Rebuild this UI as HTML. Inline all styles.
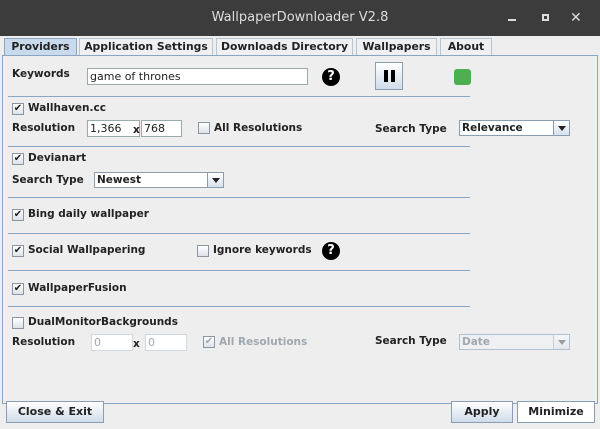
<!DOCTYPE html><html><head><style>
*{margin:0;padding:0;box-sizing:border-box}
body{width:600px;height:429px;background:#eeeeee;position:relative;overflow:hidden;font-family:"DejaVu Sans","Liberation Sans",sans-serif;font-size:10.5px;font-weight:bold;color:#222}
.a{position:absolute;white-space:nowrap}
.title{left:0;top:0;width:600px;height:36px;background:#3c3c3c;color:#ddd;font-weight:normal;font-size:13px;text-align:center;line-height:36px}
.tab{top:38px;height:17px;border:1px solid #b8c4d0;border-bottom:none;background:#eef0f2;line-height:15px;text-align:center;font-size:10.8px}
.panel{left:2px;top:55px;width:596px;height:349px;border:1px solid #8aa6c4;background:#eeeeee}
.sep{height:1px;background:#8aa6c4;left:8px;width:462px}
.in{background:#fff;border:1px solid #9aa;font-weight:normal;font-size:11px;padding-left:2px;line-height:15px;height:17px}
.cb{width:12px;height:12px;border:1px solid #8a96a4;background:linear-gradient(#fff,#dde3ea);font-size:10px;line-height:10px;text-align:center}
.btn{border:1px solid #8a9db3;background:linear-gradient(#fff,#cfdceb);text-align:center;line-height:20px;font-size:11px}
.combo{height:16px;border:1px solid #8a9db3;background:#fff;line-height:14px;padding-left:2px}
.arr{position:absolute;right:0;top:0;width:16px;height:14px;border-left:1px solid #8a9db3;background:linear-gradient(#fff,#d6e0eb)}
.arr:after{content:"";position:absolute;left:4px;top:5px;border:4px solid transparent;border-top:5px solid #222}
.q{width:18px;height:18px;border-radius:50%;background:#000;color:#fff;text-align:center;line-height:18px;font-size:13px}
.dis{color:#a0a8b0}
</style></head><body>
<div class="a title">WallpaperDownloader V2.8</div>
<div class="a" style="left:508px;top:19px;width:8px;height:2px;background:#ddd"></div>
<div class="a" style="left:542px;top:14px;width:7px;height:7px;border:2px solid #ddd"></div>
<div class="a" style="left:570px;top:8px;color:#ddd;font-size:14px;line-height:20px">✕</div>
<div class="a panel"></div>
<div class="a tab" style="left:4px;width:73px;background:#c8daec;border-color:#8aa6c4">Providers</div>
<div class="a tab" style="left:79px;width:134px">Application Settings</div>
<div class="a tab" style="left:216px;width:137px">Downloads Directory</div>
<div class="a tab" style="left:356px;width:81px">Wallpapers</div>
<div class="a tab" style="left:440px;width:52px">About</div>

<div class="a" style="left:12px;top:68px">Keywords</div>
<div class="a in" style="left:87px;top:68px;width:221px">game of thrones</div>
<div class="a q" style="left:322px;top:68px">?</div>
<div class="a btn" style="left:375px;top:62px;width:28px;height:28px"><div class="a" style="left:8px;top:7px;width:4px;height:12px;background:#000"></div><div class="a" style="left:15px;top:7px;width:4px;height:12px;background:#000"></div></div>
<div class="a" style="left:454px;top:69px;width:17px;height:16px;background:#4caf50;border-radius:3px"></div>
<div class="a sep" style="top:96px"></div>

<div class="a cb" style="left:12px;top:103px">✔</div><div class="a" style="left:28px;top:102px">Wallhaven.cc</div>
<div class="a" style="left:12px;top:122px">Resolution</div>
<div class="a in" style="left:87px;top:120px;width:53px">1,366</div>
<div class="a" style="left:133px;top:124px">x</div>
<div class="a in" style="left:141px;top:120px;width:41px">768</div>
<div class="a cb" style="left:198px;top:122px"></div><div class="a" style="left:214px;top:122px">All Resolutions</div>
<div class="a" style="left:375px;top:123px">Search Type</div>
<div class="a combo" style="left:459px;top:120px;width:111px">Relevance<div class="arr"></div></div>
<div class="a sep" style="top:146px"></div>

<div class="a cb" style="left:12px;top:153px">✔</div><div class="a" style="left:28px;top:152px">Devianart</div>
<div class="a" style="left:12px;top:174px">Search Type</div>
<div class="a combo" style="left:94px;top:172px;width:130px">Newest<div class="arr"></div></div>
<div class="a sep" style="top:197px"></div>

<div class="a cb" style="left:12px;top:209px">✔</div><div class="a" style="left:28px;top:208px">Bing daily wallpaper</div>
<div class="a sep" style="top:233px"></div>

<div class="a cb" style="left:12px;top:245px">✔</div><div class="a" style="left:28px;top:244px">Social Wallpapering</div>
<div class="a cb" style="left:197px;top:245px"></div><div class="a" style="left:213px;top:244px">Ignore keywords</div>
<div class="a q" style="left:322px;top:242px">?</div>
<div class="a sep" style="top:270px"></div>

<div class="a cb" style="left:12px;top:283px">✔</div><div class="a" style="left:28px;top:282px">WallpaperFusion</div>
<div class="a sep" style="top:306px"></div>

<div class="a cb" style="left:12px;top:317px"></div><div class="a" style="left:28px;top:316px">DualMonitorBackgrounds</div>
<div class="a" style="left:12px;top:336px">Resolution</div>
<div class="a in dis" style="left:91px;top:334px;width:42px;border-color:#d0d8e0">0</div>
<div class="a" style="left:133px;top:338px">x</div>
<div class="a in dis" style="left:145px;top:334px;width:42px;border-color:#d0d8e0">0</div>
<div class="a cb dis" style="left:203px;top:336px">✔</div><div class="a dis" style="left:219px;top:336px">All Resolutions</div>
<div class="a" style="left:375px;top:335px">Search Type</div>
<div class="a combo dis" style="left:459px;top:334px;width:111px;background:#eef0f2;border-color:#b0c0d0">Date<div class="arr" style="opacity:.4"></div></div>

<div class="a btn" style="left:6px;top:401px;width:98px;height:22px">Close &amp; Exit</div>
<div class="a btn" style="left:451px;top:401px;width:62px;height:22px">Apply</div>
<div class="a btn" style="left:517px;top:401px;width:78px;height:22px;background:#fff">Minimize</div>
</body></html>
